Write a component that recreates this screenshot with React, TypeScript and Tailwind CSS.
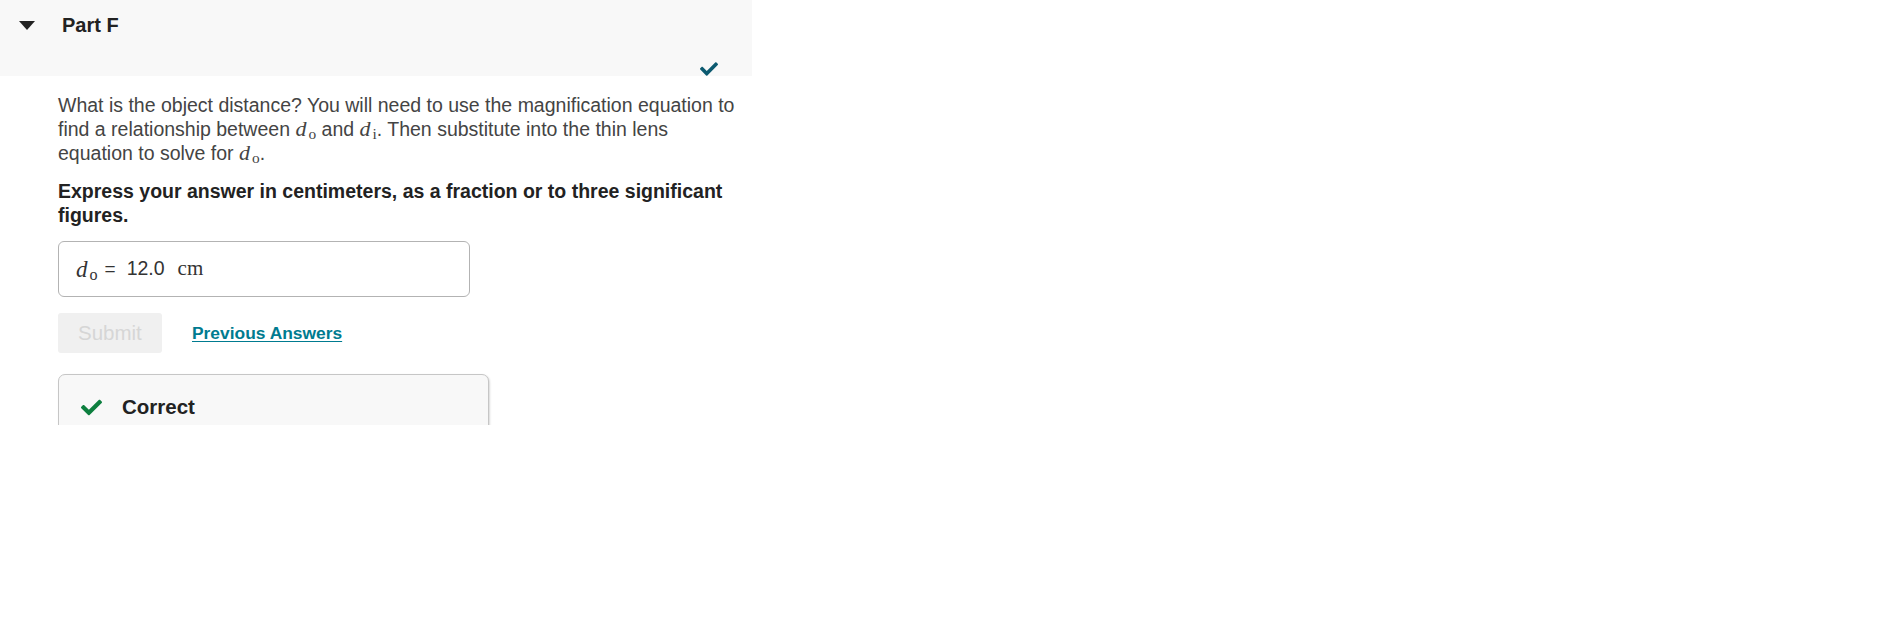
import React from "react";
import { FaCheck } from "react-icons/fa";

const sans = { fontFamily: '"Liberation Sans", Arial, sans-serif' };

function MathVar({ sub, size = "text-[22px]" }: { sub: string; size?: string }) {
  return (
    <span className={`font-['Liberation_Serif',serif] ${size} leading-none whitespace-nowrap`}>
      <span className="italic">d</span>
      <span className="text-[0.7em] relative top-[0.22em] ml-[2px]">{sub}</span>
    </span>
  );
}

export default function App() {
  return (
    <div className="w-[1877px] h-[629px] bg-white" style={sans}>
      <div className="w-[752px] h-[425px] overflow-hidden">
        <div className="relative h-[76px] bg-[#f8f8f8]">
          <div className="absolute left-[19px] top-[21px] w-0 h-0 border-l-[8px] border-r-[8px] border-t-[9px] border-l-transparent border-r-transparent border-t-[#222]" />
          <div className="absolute left-[62px] top-[12px] text-[20px] font-bold text-[#222] leading-[26px]">
            Part F
          </div>
          <FaCheck className="absolute left-[700px] top-[60px] text-[#0c5a70]" size={18} />
        </div>
        <div className="pl-[58px] pr-[10px] pt-[17px]">
          <p className="text-[19.5px] leading-[24px] text-[#444]">
            What is the object distance? You will need to use the magnification equation to find a
            relationship between <MathVar sub="o" /> and <MathVar sub="i" />. Then substitute into the
            thin lens equation to solve for <MathVar sub="o" />.
          </p>
          <p className="mt-[14px] text-[19.5px] leading-[24px] font-bold text-[#222]">
            Express your answer in centimeters, as a fraction or to three significant figures.
          </p>
          <div className="mt-[14px] w-[412px] h-[56px] border border-[#b3b3b3] rounded-[6px] flex items-center pl-[17px] text-[#333]">
            <MathVar sub="o" size="text-[23px]" />
            <span className="ml-[7px] text-[19px]">=</span>
            <span className="ml-[11px] text-[19.5px]">12.0</span>
            <span className="ml-[13px] text-[21px] font-['Liberation_Serif',serif]">cm</span>
          </div>
          <div className="mt-[16px] flex items-center">
            <div className="w-[104px] h-[40px] bg-[#f0f0f0] rounded-[3px] flex items-center pl-[20px] text-[20.5px] text-[#d6d6d6]">
              Submit
            </div>
            <a className="ml-[30px] text-[17.4px] font-bold text-[#007b90] underline underline-offset-2">
              Previous Answers
            </a>
          </div>
          <div className="mt-[21px] w-[431px] h-[80px] bg-[#f8f8f8] border border-[#c6c6c6] rounded-[7px] shadow-[1px_1px_2px_rgba(0,0,0,0.15)] flex items-start pt-[19px] pl-[22px]">
            <FaCheck className="mt-[3px] text-[#0d7f3f]" size={21} />
            <span className="ml-[20px] text-[20.5px] font-bold text-[#222] leading-[26px]">Correct</span>
          </div>
        </div>
      </div>
    </div>
  );
}
